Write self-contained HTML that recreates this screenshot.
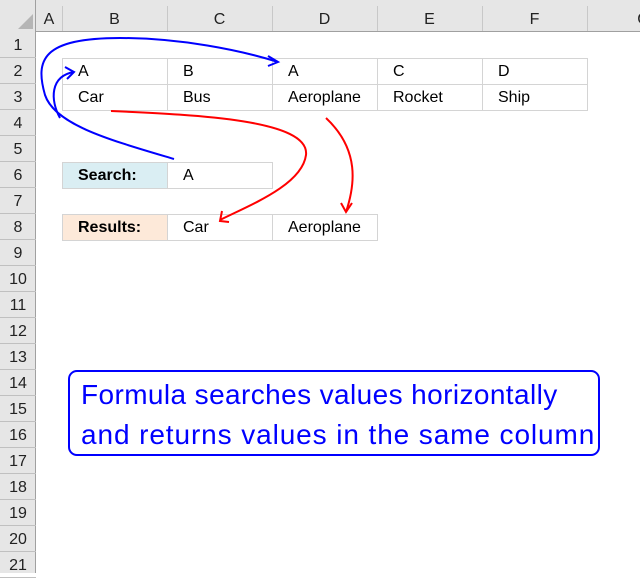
<!DOCTYPE html>
<html><head><style>
body{margin:0;width:640px;height:573px;overflow:hidden;background:#fff;font-family:"Liberation Sans",sans-serif;position:relative}
.h{position:absolute;background:#e6e6e6;color:#222;font-size:16px;text-align:center;box-sizing:border-box}
.c{position:absolute;font-size:16px;color:#000;box-sizing:border-box;border:1px solid #d4d4d4;height:27px;line-height:25px;padding-left:15px;width:106px}
</style></head><body>
<div class="h" style="left:0;top:0;width:640px;height:32px;border-bottom:1px solid #a0a0a0"></div>
<div class="h" style="left:0;top:0;width:36px;height:573px;border-right:1px solid #a0a0a0"></div>
<svg style="position:absolute;left:18px;top:14px" width="16" height="16"><polygon points="15,0 15,15 0,15" fill="#b5b5b5"/></svg>
<div id="cols"></div>
<script>
var cols=[["A",36,62],["B",62,167],["C",167,272],["D",272,377],["E",377,482],["F",482,587],["G",587,700]],s="";
cols.forEach(function(c){s+='<div class="h" style="left:'+c[1]+'px;top:8px;width:'+(c[2]-c[1])+'px;height:23px;line-height:23px;background:none">'+c[0]+'</div><div style="position:absolute;left:'+c[2]+'px;top:6px;width:1px;height:25px;background:#c8c8c8"></div>';});
for(var r=1;r<=21;r++){var t=32+26*(r-1);s+='<div class="h" style="left:0;top:'+t+'px;width:36px;height:26px;line-height:27px;background:none;border-bottom:1px solid #c0c0c0">'+r+'</div>';}
document.getElementById("cols").innerHTML=s;
</script>
<div class="c" style="left:62px;top:58px">A</div>
<div class="c" style="left:167px;top:58px">B</div>
<div class="c" style="left:272px;top:58px">A</div>
<div class="c" style="left:377px;top:58px">C</div>
<div class="c" style="left:482px;top:58px">D</div>
<div class="c" style="left:62px;top:84px">Car</div>
<div class="c" style="left:167px;top:84px">Bus</div>
<div class="c" style="left:272px;top:84px">Aeroplane</div>
<div class="c" style="left:377px;top:84px">Rocket</div>
<div class="c" style="left:482px;top:84px">Ship</div>
<div class="c" style="left:62px;top:162px;background:#daeef3;font-weight:bold">Search:</div>
<div class="c" style="left:167px;top:162px">A</div>
<div class="c" style="left:62px;top:214px;background:#fde9d9;font-weight:bold">Results:</div>
<div class="c" style="left:167px;top:214px">Car</div>
<div class="c" style="left:272px;top:214px">Aeroplane</div>
<div style="position:absolute;left:68px;top:370px;width:532px;height:86px;box-sizing:border-box;border:2px solid #0000ff;border-radius:9px;color:#0000ff;font-size:28px;line-height:40px;padding:3px 0 0 11px;white-space:nowrap;overflow:hidden"><span style="letter-spacing:0.4px">Formula searches values horizontally</span><br><span style="letter-spacing:0.9px">and returns values in the same column</span></div>
<svg style="position:absolute;left:0;top:0" width="640" height="573" fill="none" stroke-width="2">
<path d="M174 159 C110 140 55 125 45 95 C35 60 42 38 120 38 C180 38 240 50 278 62" stroke="#0000ff"/>
<path d="M268 56 L278 62 L268 66" stroke="#0000ff"/>
<path d="M60 118 C50 100 50 76 74 72" stroke="#0000ff"/>
<path d="M65 67 L74 72 L67 79" stroke="#0000ff"/>
<path d="M111 111 C200 115 310 120 306 155 C302 185 250 205 220 220" stroke="#ff0000"/>
<path d="M222 211 L220 221 L229 222" stroke="#ff0000"/>
<path d="M326 118 C360 150 355 185 346 212" stroke="#ff0000"/>
<path d="M341 203 L346 212 L352 203" stroke="#ff0000"/>
</svg>
</body></html>
